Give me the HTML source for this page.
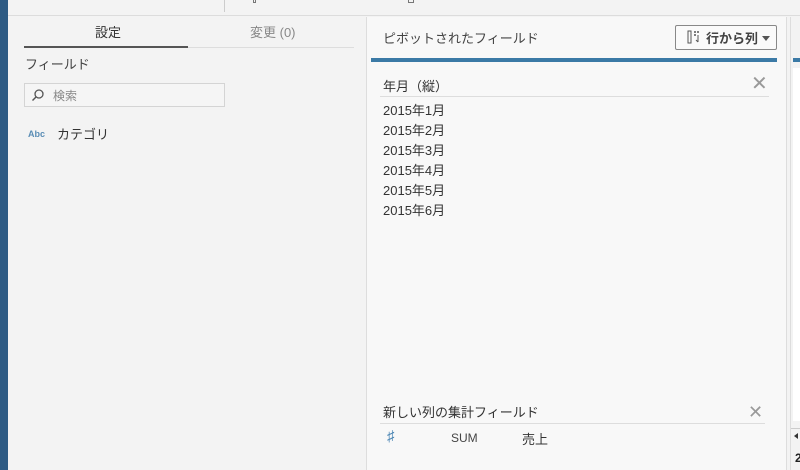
<!DOCTYPE html>
<html><head><meta charset="utf-8"><style>
*{margin:0;padding:0;box-sizing:border-box}
body{width:800px;height:470px;overflow:hidden;background:#f3f3f3;font-family:"Liberation Sans","Noto Sans CJK JP",sans-serif;color:#333;position:relative}
.a{position:absolute}
.t{font-size:13px;white-space:nowrap}
</style></head><body>
<div class="a" style="left:0;top:0;width:8px;height:470px;background:#2e5b84"></div>
<div class="a" style="left:8px;top:0;width:792px;height:16px;background:#f3f3f3;border-bottom:1px solid #dcdcdc"></div>
<div class="a" style="left:224px;top:0;width:1px;height:12px;background:#ccc"></div>
<div class="a" style="left:253px;top:0;width:3px;height:3px;border:1px solid #777;border-top:none"></div>
<div class="a" style="left:408px;top:0;width:6px;height:3px;border:1px solid #777;border-top:none"></div>
<!-- left panel -->
<div class="a t" style="left:95px;top:22px;color:#333">設定</div>
<div class="a t" style="left:250px;top:22px;color:#888">変更 (0)</div>
<div class="a" style="left:24px;top:46px;width:164px;height:2px;background:#555"></div>
<div class="a" style="left:188px;top:47px;width:166px;height:1px;background:#ddd"></div>
<div class="a t" style="left:25px;top:54px;color:#444">フィールド</div>
<div class="a" style="left:24px;top:83px;width:201px;height:24px;border:1px solid #d4d4d4;background:#f5f5f5"></div>
<svg class="a" style="left:31px;top:88px" width="14" height="14" viewBox="0 0 14 14"><circle cx="8" cy="6" r="4" fill="none" stroke="#555" stroke-width="1.3"/><line x1="5" y1="9" x2="1.5" y2="12.5" stroke="#555" stroke-width="1.4"/></svg>
<div class="a" style="left:53px;top:87px;font-size:12px;color:#888">検索</div>
<div class="a" style="left:28px;top:129px;font-size:9px;font-weight:bold;color:#5a8db5">Abc</div>
<div class="a t" style="left:57px;top:124px;color:#333">カテゴリ</div>
<!-- middle panel -->
<div class="a" style="left:366px;top:17px;width:421px;height:453px;background:#f8f8f8;border-left:1px solid #ddd;border-right:1px solid #ddd"></div>
<div class="a t" style="left:383px;top:28px;color:#444">ピボットされたフィールド</div>
<div class="a" style="left:675px;top:25px;width:102px;height:25px;border:1px solid #888;border-radius:2px;background:#fafafa"></div>
<svg class="a" style="left:687px;top:30px" width="14" height="15" viewBox="0 0 14 15"><rect x="1" y="1" width="3" height="12" fill="none" stroke="#555"/><circle cx="8" cy="2" r="1" fill="#555"/><circle cx="11" cy="2" r="1" fill="#555"/><circle cx="8" cy="5" r="1" fill="#555"/><path d="M11 5v7M9 10l2 2" fill="none" stroke="#555"/></svg>
<div class="a" style="left:706px;top:28px;font-size:13px;font-weight:bold;color:#444">行から列</div>
<div class="a" style="left:762px;top:36px;width:0;height:0;border-left:4px solid transparent;border-right:4px solid transparent;border-top:5px solid #555"></div>
<div class="a" style="left:371px;top:58px;width:406px;height:4px;background:#3b7aa6"></div>
<div class="a t" style="left:383px;top:76px;color:#333">年月（縦）</div>
<div class="a" style="left:751px;top:74px;font-size:20px;color:#999;line-height:20px">✕</div>
<div class="a" style="left:380px;top:96px;width:389px;height:1px;background:#ddd"></div>
<div class="a t" style="left:383px;top:101px;line-height:20px;color:#333">2015年1月<br>2015年2月<br>2015年3月<br>2015年4月<br>2015年5月<br>2015年6月</div>
<div class="a t" style="left:383px;top:402px;color:#333">新しい列の集計フィールド</div>
<div class="a" style="left:748px;top:402px;font-size:18px;color:#999;line-height:20px">✕</div>
<div class="a" style="left:380px;top:423px;width:385px;height:1px;background:#ddd"></div>
<div class="a" style="left:387px;top:428px;font-size:15px;color:#4b86b4">♯</div>
<div class="a" style="left:451px;top:431px;font-size:12px;color:#444">SUM</div>
<div class="a t" style="left:522px;top:429px;color:#333">売上</div>
<!-- right panel -->
<div class="a" style="left:790px;top:17px;width:10px;height:453px;background:#f3f3f3;border-left:1px solid #ddd"></div>
<div class="a" style="left:793px;top:58px;width:7px;height:4px;background:#3b7aa6"></div>
<div class="a" style="left:793px;top:68px;width:7px;height:353px;background:#fff"></div>
<div class="a" style="left:791px;top:428px;width:9px;height:1px;background:#ccc"></div>
<div class="a" style="left:794px;top:433px;width:0;height:0;border-top:3px solid transparent;border-bottom:3px solid transparent;border-right:4px solid #333"></div>
<div class="a" style="left:795px;top:451px;font-size:12px;font-weight:bold;color:#222">2</div>
</body></html>
